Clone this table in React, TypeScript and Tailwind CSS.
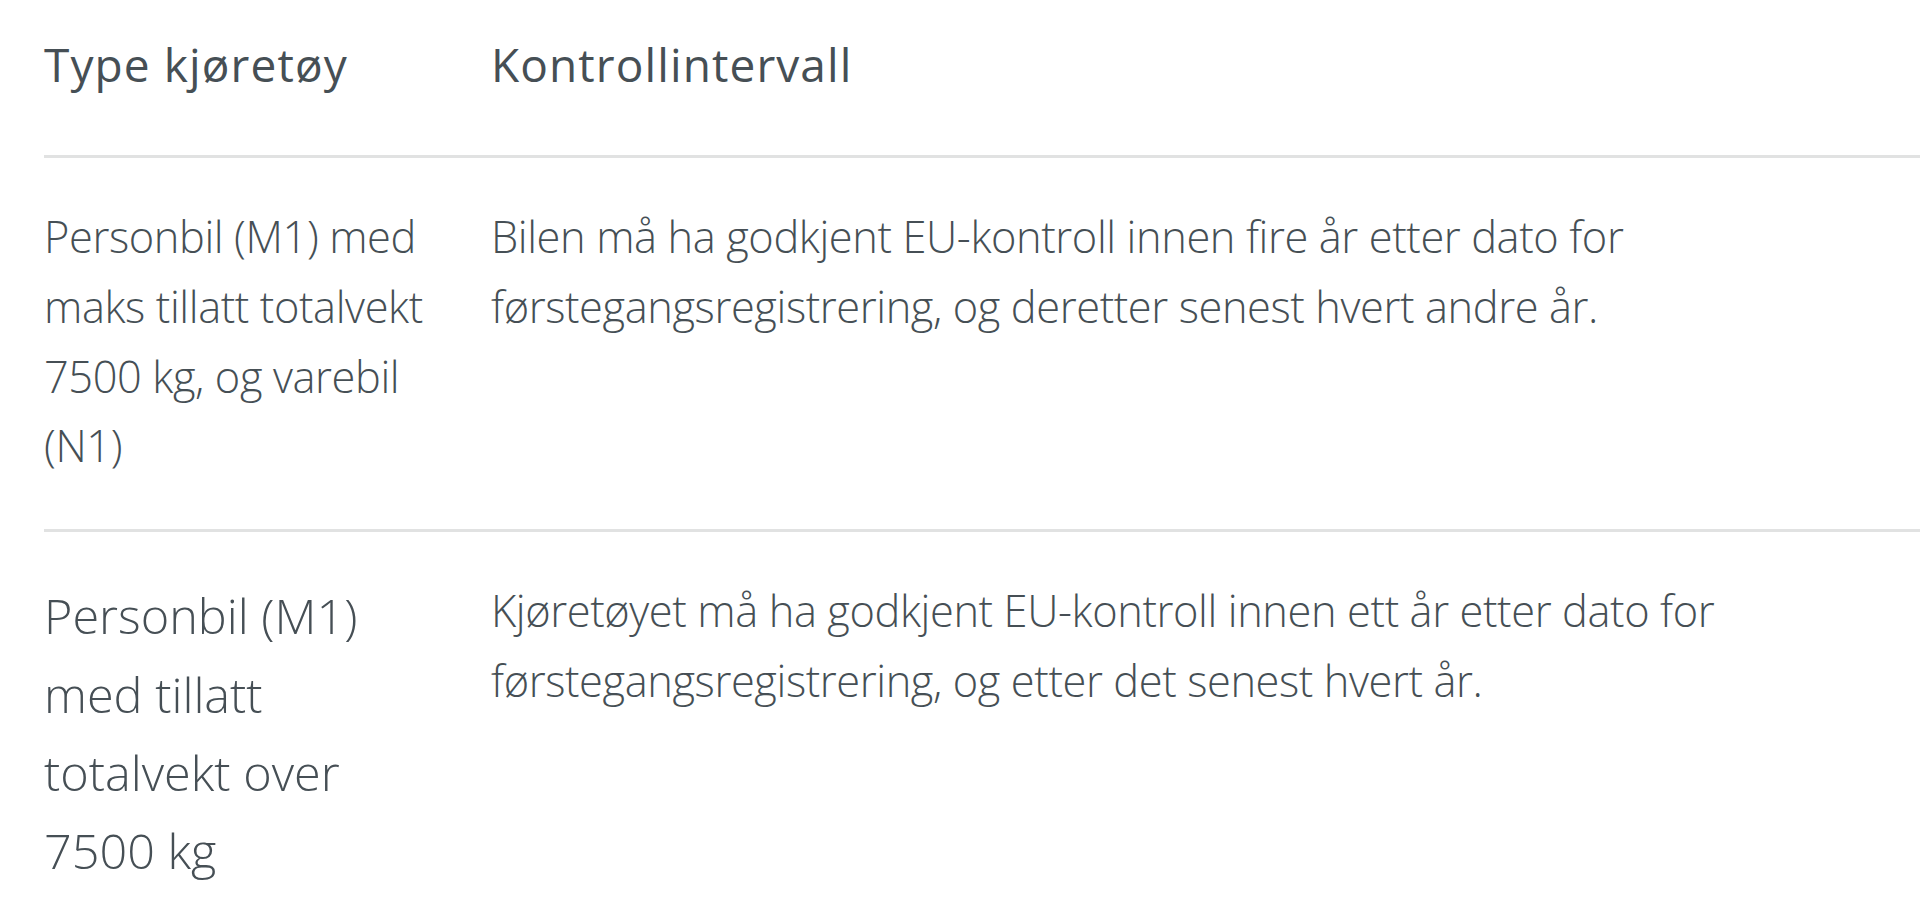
const rows = [
  {
    type: "Personbil (M1) med maks tillatt totalvekt 7500 kg, og varebil (N1)",
    big: false,
    interval:
      "Bilen må ha godkjent EU-kontroll innen fire år etter dato for førstegangsregistrering, og deretter senest hvert andre år.",
  },
  {
    type: "Personbil (M1) med tillatt totalvekt over 7500 kg",
    big: true,
    interval:
      "Kjøretøyet må ha godkjent EU-kontroll innen ett år etter dato for førstegangsregistrering, og etter det senest hvert år.",
  },
];

export default function App() {
  return (
    <div className="min-h-screen bg-white pl-[44px] font-['Open_Sans','Liberation_Sans',sans-serif] text-[#464f55]">
      <table className="w-full border-collapse text-left">
        <thead>
          <tr className="border-b-[3px] border-[#e1e2e2]">
            <th className="w-[447px] pt-[34px] pb-[60px] pr-[52px] align-top text-[46px] leading-[61px] tracking-[1.1px] font-normal">
              Type kjøretøy
            </th>
            <th className="pt-[34px] pb-[60px] align-top text-[46px] leading-[61px] tracking-[1.1px] font-normal">
              Kontrollintervall
            </th>
          </tr>
        </thead>
        <tbody>
          {rows.map((r, i) => (
            <tr key={i} className={i === 0 ? "border-b-[3px] border-[#e1e2e2]" : ""}>
              <td
                className={
                  r.big
                    ? "pr-[52px] pt-[44px] pb-[44px] align-top text-[48.6px] leading-[78.4px] font-light"
                    : "pr-[52px] pt-[44px] pb-[48px] align-top text-[43.4px] leading-[69.8px] tracking-[-0.4px] font-light"
                }
              >
                {r.type}
              </td>
              <td className="pt-[44px] pb-[44px] align-top text-[43.4px] leading-[69.8px] tracking-[-0.4px] font-light">
                {r.interval}
              </td>
            </tr>
          ))}
        </tbody>
      </table>
    </div>
  );
}
